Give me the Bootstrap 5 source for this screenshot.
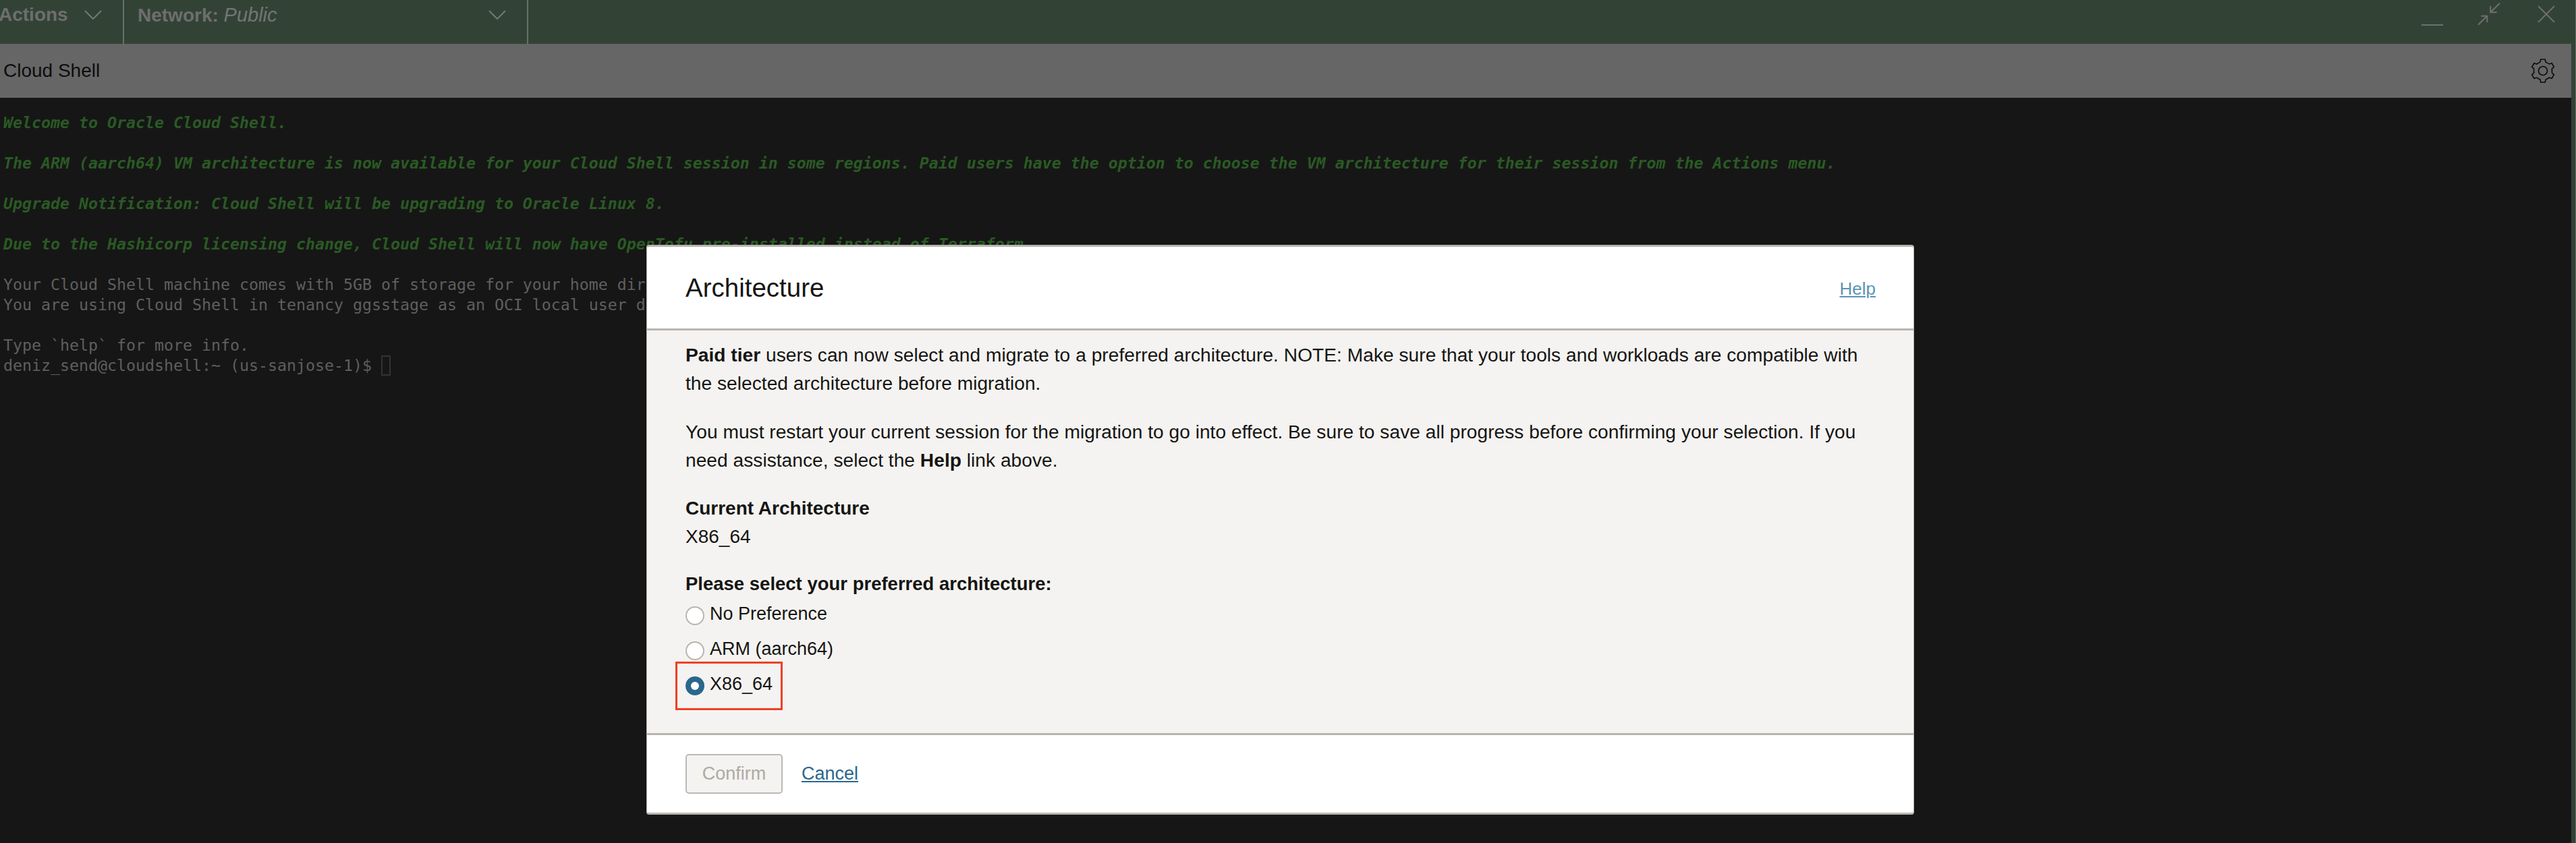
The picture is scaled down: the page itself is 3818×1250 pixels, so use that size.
<!DOCTYPE html>
<html lang="en">
<head>
<meta charset="utf-8">
<title>Cloud Shell</title>
<link href="https://cdn.jsdelivr.net/npm/bootstrap@5.3.0/dist/css/bootstrap.min.css" rel="stylesheet">
<style>
html,body{height:100%;}
body{background:#324336;overflow:hidden;font-family:"Liberation Sans",Arial,sans-serif;color:#161513;font-size:27px;border-right:1px solid #626c65;}
.shell-wrap{height:1250px;width:3811px;position:relative;}
.top-strip{height:65px;background:#324336;color:#6e6e6e;font-size:28px;line-height:44px;font-weight:700;}
.seg{border-right:2px solid #66716a;height:65px;padding-right:31px;}
.seg-actions{width:184px;}
.seg-actions span{margin-left:-2px;}
.seg-network{width:599px;padding-left:20px;}
.seg-network em{color:#757575;font-weight:400;font-size:29px;}
.chev{width:26px;height:14px;margin-top:15px;}
.win-icons{margin-left:auto;padding-right:24px;stroke:#6f6f6f;}
.win-min{width:32px;height:2px;background:#6f6f6f;margin-top:36px;margin-right:51px;}
.win-col{width:34px;height:34px;margin-top:4px;margin-right:55px;}
.win-close{width:26px;height:26px;margin-top:8px;}
.head-strip{height:80px;background:#666;color:#0d0d0d;font-size:28px;padding:0 24px 0 5px;}
.gear{width:36px;height:36px;}
.term{background:#161616;height:1105px;padding:22px 0 0 5px;font-family:"DejaVu Sans Mono","Liberation Mono",monospace;font-size:23.25px;line-height:30px;color:#5f5f5f;white-space:pre;}
.term .g{color:#2a5a24;font-weight:700;font-style:italic;}
.cursor{display:inline-block;width:14px;height:30px;border:2px solid #333;vertical-align:top;}
.arch-card{position:absolute;left:958px;top:363px;width:1879px;height:845px;border:0;border-top:3px solid #b9b5ae;border-bottom:3px solid #b9b5ae;border-right:1px solid #b9b5ae;border-left:1px solid #b9b5ae;border-radius:4px;background:#f4f3f1;overflow:hidden;}
.arch-head{height:124px;background:#fff;border-bottom:3px solid #b9b5ae;padding:2px 56px 0 57px;border-radius:0;}
.arch-title{font-size:38.5px;font-weight:400;margin:0;line-height:1;}
.help-link{font-size:26px;color:#5a94b5;margin-top:2px;}
.arch-body{padding:15px 57px 0;line-height:42px;font-size:28.2px;}
.arch-body p{margin:0 0 30px;}
.arch-body p.arch-current{margin-bottom:28px;font-size:28px;}
.arch-ask{font-size:27.5px;font-weight:700;}
.arch-pick{margin-top:4px;position:relative;font-size:27px;}
.arch-opt{padding-left:36px;min-height:28px;height:52px;margin:0;line-height:38px;}
.arch-opt .form-check-input{width:28px;height:28px;margin-left:-36px;margin-top:8px;border:2px solid #b9b5ae;background-color:#fff;}
.arch-opt .form-check-input:checked{background-color:#2b678d;border-color:#2b678d;}
.red-mark{position:absolute;left:-15px;top:90px;width:159px;height:72px;border:3px solid #ef4123;pointer-events:none;}
.arch-foot{position:absolute;left:0;right:0;bottom:0;height:118px;background:#fff;border-top:3px solid #b9b5ae;padding:26px 57px;gap:28px;border-radius:0;}
.btn-confirm,.btn-confirm:disabled{width:144px;height:59px;font-size:27px;color:#aeaaa4;background:#f4f3f1;border:2px solid #bdb9b3;border-radius:5px;padding:0;opacity:1;}
.cancel-link{font-size:27px;color:#2b678d;}
</style>
</head>
<body>
<div class="shell-wrap">
  <div class="top-strip d-flex">
    <div class="seg seg-actions d-flex justify-content-between"><span>Actions</span>
      <svg class="chev" viewBox="0 0 26 14" fill="none" stroke="#777" stroke-width="2"><path d="M1 1l12 12L25 1"/></svg></div>
    <div class="seg seg-network d-flex justify-content-between"><span>Network: <em>Public</em></span>
      <svg class="chev" viewBox="0 0 26 14" fill="none" stroke="#777" stroke-width="2"><path d="M1 1l12 12L25 1"/></svg></div>
    <div class="win-icons d-flex align-items-start">
      <div class="win-min"></div>
      <svg class="win-col" viewBox="0 0 34 34" fill="none" stroke-width="2"><path d="M33 .7L19.3 14.3M19.3 5v9.3h9.4M1 32.7l13.3-13M14.3 29.3v-9.6H5.3"/></svg>
      <svg class="win-close" viewBox="0 0 26 26" fill="none" stroke-width="2"><path d="M1 1l24 24M25 1L1 25"/></svg>
    </div>
  </div>
  <div class="head-strip d-flex align-items-center justify-content-between">
    <span>Cloud Shell</span>
    <svg class="gear" viewBox="0 0 36 36" fill="none" stroke="#0d0d0d" stroke-width="1.7">
      <circle cx="18" cy="18" r="6.5"/>
      <path id="cog" d="M13.8 5.2L14.8 1H21.2L22.2 5.2Q24.8 5.9 27 8"/>
      <use href="#cog" transform="rotate(60 18 18)"/><use href="#cog" transform="rotate(120 18 18)"/><use href="#cog" transform="rotate(180 18 18)"/><use href="#cog" transform="rotate(240 18 18)"/><use href="#cog" transform="rotate(300 18 18)"/>
    </svg>
  </div>
  <div class="term"><span class="g">Welcome to Oracle Cloud Shell.</span>

<span class="g">The ARM (aarch64) VM architecture is now available for your Cloud Shell session in some regions. Paid users have the option to choose the VM architecture for their session from the Actions menu.</span>

<span class="g">Upgrade Notification: Cloud Shell will be upgrading to Oracle Linux 8.</span>

<span class="g">Due to the Hashicorp licensing change, Cloud Shell will now have OpenTofu pre-installed instead of Terraform</span>

Your Cloud Shell machine comes with 5GB of storage for your home dir
You are using Cloud Shell in tenancy ggsstage as an OCI local user d

Type `help` for more info.
deniz_send@cloudshell:~ (us-sanjose-1)$ <span class="cursor"></span></div>

  <div class="card arch-card">
    <div class="card-header arch-head d-flex align-items-center justify-content-between">
      <h1 class="arch-title">Architecture</h1>
      <a href="#" class="help-link">Help</a>
    </div>
    <div class="card-body arch-body">
      <p><b>Paid tier</b> users can now select and migrate to a preferred architecture. NOTE: Make sure that your tools and workloads are compatible with<br>the selected architecture before migration.</p>
      <p>You must restart your current session for the migration to go into effect. Be sure to save all progress before confirming your selection. If you<br>need assistance, select the <b>Help</b> link above.</p>
      <p class="arch-current"><b>Current Architecture</b><br><span class="arch-val">X86_64</span></p>
      <div class="arch-ask">Please select your preferred architecture:</div>
      <div class="arch-pick">
        <div class="form-check arch-opt"><input class="form-check-input" type="radio" name="arch" id="a1"><label class="form-check-label" for="a1">No Preference</label></div>
        <div class="form-check arch-opt"><input class="form-check-input" type="radio" name="arch" id="a2"><label class="form-check-label" for="a2">ARM (aarch64)</label></div>
        <div class="form-check arch-opt"><input class="form-check-input" type="radio" name="arch" id="a3" checked><label class="form-check-label" for="a3">X86_64</label></div>
        <div class="red-mark"></div>
      </div>
    </div>
    <div class="card-footer arch-foot d-flex align-items-center">
      <button class="btn btn-confirm" type="button" disabled>Confirm</button>
      <a href="#" class="cancel-link">Cancel</a>
    </div>
  </div>
</div>
<script src="https://cdn.jsdelivr.net/npm/bootstrap@5.3.0/dist/js/bootstrap.bundle.min.js"></script>
</body>
</html>
